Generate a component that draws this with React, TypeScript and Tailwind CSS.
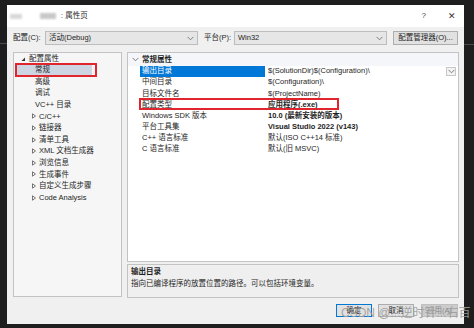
import React from "react";

const tree: { label: string; kind: "open" | "leaf" | "closed"; selected?: boolean }[] = [
  { label: "配置属性", kind: "open" },
  { label: "常规", kind: "leaf", selected: true },
  { label: "高级", kind: "leaf" },
  { label: "调试", kind: "leaf" },
  { label: "VC++ 目录", kind: "leaf" },
  { label: "C/C++", kind: "closed" },
  { label: "链接器", kind: "closed" },
  { label: "清单工具", kind: "closed" },
  { label: "XML 文档生成器", kind: "closed" },
  { label: "浏览信息", kind: "closed" },
  { label: "生成事件", kind: "closed" },
  { label: "自定义生成步骤", kind: "closed" },
  { label: "Code Analysis", kind: "closed" },
];

const props: { name: string; value: string; bold?: boolean; selected?: boolean }[] = [
  { name: "输出目录", value: "$(SolutionDir)$(Configuration)\\", selected: true },
  { name: "中间目录", value: "$(Configuration)\\" },
  { name: "目标文件名", value: "$(ProjectName)" },
  { name: "配置类型", value: "应用程序(.exe)", bold: true },
  { name: "Windows SDK 版本", value: "10.0 (最新安装的版本)", bold: true },
  { name: "平台工具集", value: "Visual Studio 2022 (v143)", bold: true },
  { name: "C++ 语言标准", value: "默认(ISO C++14 标准)" },
  { name: "C 语言标准", value: "默认(旧 MSVC)" },
];

function Chevron() {
  return (
    <svg width="7" height="5" viewBox="0 0 7 5">
      <polyline points="0.6,0.9 3.5,3.8 6.4,0.9" fill="none" stroke="#707070" strokeWidth="0.9" />
    </svg>
  );
}

function Combo({ value }: { value: string }) {
  return (
    <div className="w-[153px] h-[14px] bg-[#e6e6e6] border border-[#bdbdbd] flex items-center justify-between pl-[3px] pr-[3px]">
      <span>{value}</span>
      <Chevron />
    </div>
  );
}

function TreeIcon({ kind }: { kind: "open" | "closed" }) {
  if (kind === "open") {
    return (
      <svg width="9" height="8" viewBox="0 0 9 8">
        <polygon points="5,2.5 5,6 1.5,6" fill="#333" />
      </svg>
    );
  }
  return (
    <svg width="8" height="8" viewBox="0 0 8 8">
      <polygon points="1.5,1.8 4.5,4 1.5,6.2" fill="none" stroke="#555" strokeWidth="0.8" />
    </svg>
  );
}

export default function App() {
  return (
    <div className="w-[474px] h-[328px] bg-[#1e1e1e] overflow-hidden relative font-['Liberation_Sans','Noto_Sans_CJK_SC',sans-serif] text-[7.5px] text-[#1e1e1e] leading-none">
      {/* faint editor lines behind the dialog */}
      <div className="absolute left-0 top-[43px] w-[7px] h-px bg-[#4a4a4a]" />
      <div className="absolute right-0 top-[44px] w-[10px] h-px bg-[#4a4a4a]" />

      <div className="pt-[5px] pl-[7px]">
        <div className="w-[457px] h-[319px] bg-[#f0f0f0] flex flex-col">
          {/* title bar */}
          <div className="h-[22px] bg-white flex items-center pl-[3px]">
            <div className="flex items-center gap-[18px] blur-[1px]">
              <div className="w-[12px] h-[5px] bg-[#d8d8d8]" />
              <div className="w-[16px] h-[6px] bg-[#c8c8c8]" />
            </div>
            <span className="ml-[5px] text-[7.5px]">: 属性页</span>
            <span className="ml-auto text-[8px] text-[#444]">?</span>
            <span className="ml-[22px] mr-[8px] text-[9px] text-[#333]">✕</span>
          </div>

          {/* body */}
          <div className="flex-1 flex flex-col pl-[6px] pr-[5px] pt-[4px]">
            <div className="h-[14px] flex items-center">
              <span className="w-[32px]">配置(C):</span>
              <Combo value="活动(Debug)" />
              <span className="ml-[6px] w-[30px]">平台(P):</span>
              <Combo value="Win32" />
              <div className="ml-[6px] w-[65px] h-[14px] bg-[#e1e1e1] border border-[#adadad] flex items-center justify-center">
                配置管理器(O)...
              </div>
            </div>

            <div className="mt-[7px] flex h-[246px]">
              {/* tree */}
              <div className="w-[109px] h-[245px] bg-[#f6f6f6] border border-[#c3c3c3] flex flex-col">
                {tree.map((t, i) => (
                  <div key={i} className={`${i === 0 ? "h-[11px]" : "h-[11.64px]"} flex items-center`}>
                    {t.kind === "open" && (
                      <div className="pl-[6px] flex items-center">
                        <TreeIcon kind="open" />
                        <span>{t.label}</span>
                      </div>
                    )}
                    {t.kind === "leaf" &&
                      (t.selected ? (
                        <div className="ml-[2px] w-[76px] h-[10px] bg-[#cdd4e2] flex items-center pl-[19px]">
                          {t.label}
                        </div>
                      ) : (
                        <span className="pl-[21px]">{t.label}</span>
                      ))}
                    {t.kind === "closed" && (
                      <div className="pl-[17px] flex items-center">
                        <TreeIcon kind="closed" />
                        <span>{t.label}</span>
                      </div>
                    )}
                  </div>
                ))}
              </div>

              {/* right column */}
              <div className="ml-[5px] w-[332px] flex flex-col">
                <div className="h-[210px] bg-white border border-[#c3c3c3]">
                  <div className="h-[12.5px] bg-[#f4f6f9] flex items-center pl-[4px]">
                    <Chevron />
                    <span className="ml-[3px] font-bold">常规属性</span>
                  </div>
                  {props.map((p, i) => (
                    <div key={i} className="h-[11.14px] flex items-center pl-[12px]">
                      <div
                        className={`w-[125px] h-full flex items-center pl-[2px] ${
                          p.selected ? "bg-[#0078d7] text-white" : ""
                        }`}
                      >
                        {p.name}
                      </div>
                      <div className={`flex-1 pl-[3px] flex items-center justify-between pr-[2px] ${p.bold ? "font-bold" : ""}`}>
                        <span>{p.value}</span>
                        {p.selected && (
                          <div className="w-[10px] h-[9px] border border-[#c8c8c8] bg-[#f3f3f3] flex items-center justify-center">
                            <Chevron />
                          </div>
                        )}
                      </div>
                    </div>
                  ))}
                </div>
                <div className="mt-[2px] h-[34px] bg-[#efefef] border border-[#c3c3c3] pl-[3px] pt-[3px] flex flex-col gap-[4px]">
                  <span className="font-bold">输出目录</span>
                  <span>指向已编译程序的放置位置的路径。可以包括环境变量。</span>
                </div>
              </div>
            </div>

            {/* buttons */}
            <div className="mt-[6px] flex justify-end pr-[1px]">
              <div className="w-[36px] h-[13px] bg-[#e1e1e1] border border-[#0078d7] flex items-center justify-center">
                确定
              </div>
              <div className="ml-[6px] w-[36px] h-[13px] bg-[#e1e1e1] border border-[#adadad] flex items-center justify-center">
                取消
              </div>
              <div className="ml-[7px] w-[37px] h-[13px] bg-[#cccccc] border border-[#bfbfbf] flex items-center justify-center text-[#8a8a8a]">
                应用(A)
              </div>
            </div>
          </div>
        </div>
      </div>

      {/* annotation boxes */}
      <div className="absolute left-[15px] top-[63px] w-[82px] h-[14px] border-2 border-[#e0262c]" />
      <div className="absolute left-[139px] top-[98px] w-[200px] h-[12px] border-2 border-[#e0262c]" />

      {/* watermark */}
      <div className="absolute left-[341px] top-[307px] text-[12px] text-[#9c9c9c]/90 whitespace-nowrap">
        CSDN @...逆时针...右百
      </div>
    </div>
  );
}
